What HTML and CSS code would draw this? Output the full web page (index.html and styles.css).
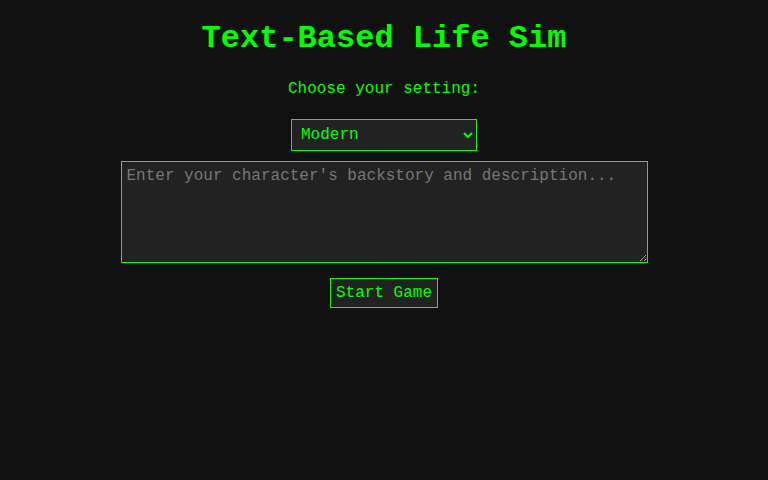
FILE: index.html
```html
<!DOCTYPE html>
<html lang="en">
<head>
<meta charset="utf-8">
<title>Text-Based Life Sim</title>
<link rel="stylesheet" href="styles.css">
</head>
<body>
<main class="setup">
  <h1 class="title">Text-Based Life Sim</h1>
  <p class="prompt">Choose your setting:</p>
  <select class="setting">
    <option>Modern</option>
    <option>Medieval</option>
    <option>Futuristic</option>
  </select>
  <textarea class="backstory" placeholder="Enter your character's backstory and description..."></textarea>
  <button class="start">Start Game</button>
</main>
</body>
</html>
```
FILE: styles.css
```css
html, body {
  margin: 0;
  background: #111;
  color: #0f0;
  font-family: "Liberation Mono", "Courier New", monospace;
  color-scheme: dark;
}

.setup {
  display: flex;
  flex-direction: column;
  align-items: center;
  padding-top: 21px;
}

.title {
  margin: 0;
  font-size: 32px;
  line-height: 36px;
  font-weight: bold;
}

.prompt {
  margin: 23px 0 0;
  font-size: 16px;
  line-height: 18px;
}

.setting {
  margin-top: 21px;
  box-sizing: border-box;
  width: 186px;
  height: 32px;
  padding: 0 4px 0 5px;
  background: #222;
  color: #0f0;
  border: 1px solid #0f0;
  border-radius: 0;
  font-family: inherit;
  font-size: 16px;
  outline: none;
}

.backstory {
  margin-top: 10px;
  box-sizing: border-box;
  width: 527px;
  height: 102px;
  padding: 5px 4px 4px 5px;
  background: #222;
  color: #0f0;
  border: 1px solid #0f0;
  border-radius: 0;
  font-family: inherit;
  font-size: 16px;
  line-height: 18px;
  outline: none;
}

.backstory::placeholder {
  color: #777;
}

.start {
  margin-top: 15px;
  box-sizing: border-box;
  height: 30px;
  padding: 5px;
  background: #222;
  color: #0f0;
  border: 1px solid #0f0;
  border-radius: 0;
  font-family: inherit;
  font-size: 16px;
  line-height: 18px;
  cursor: pointer;
}
```
